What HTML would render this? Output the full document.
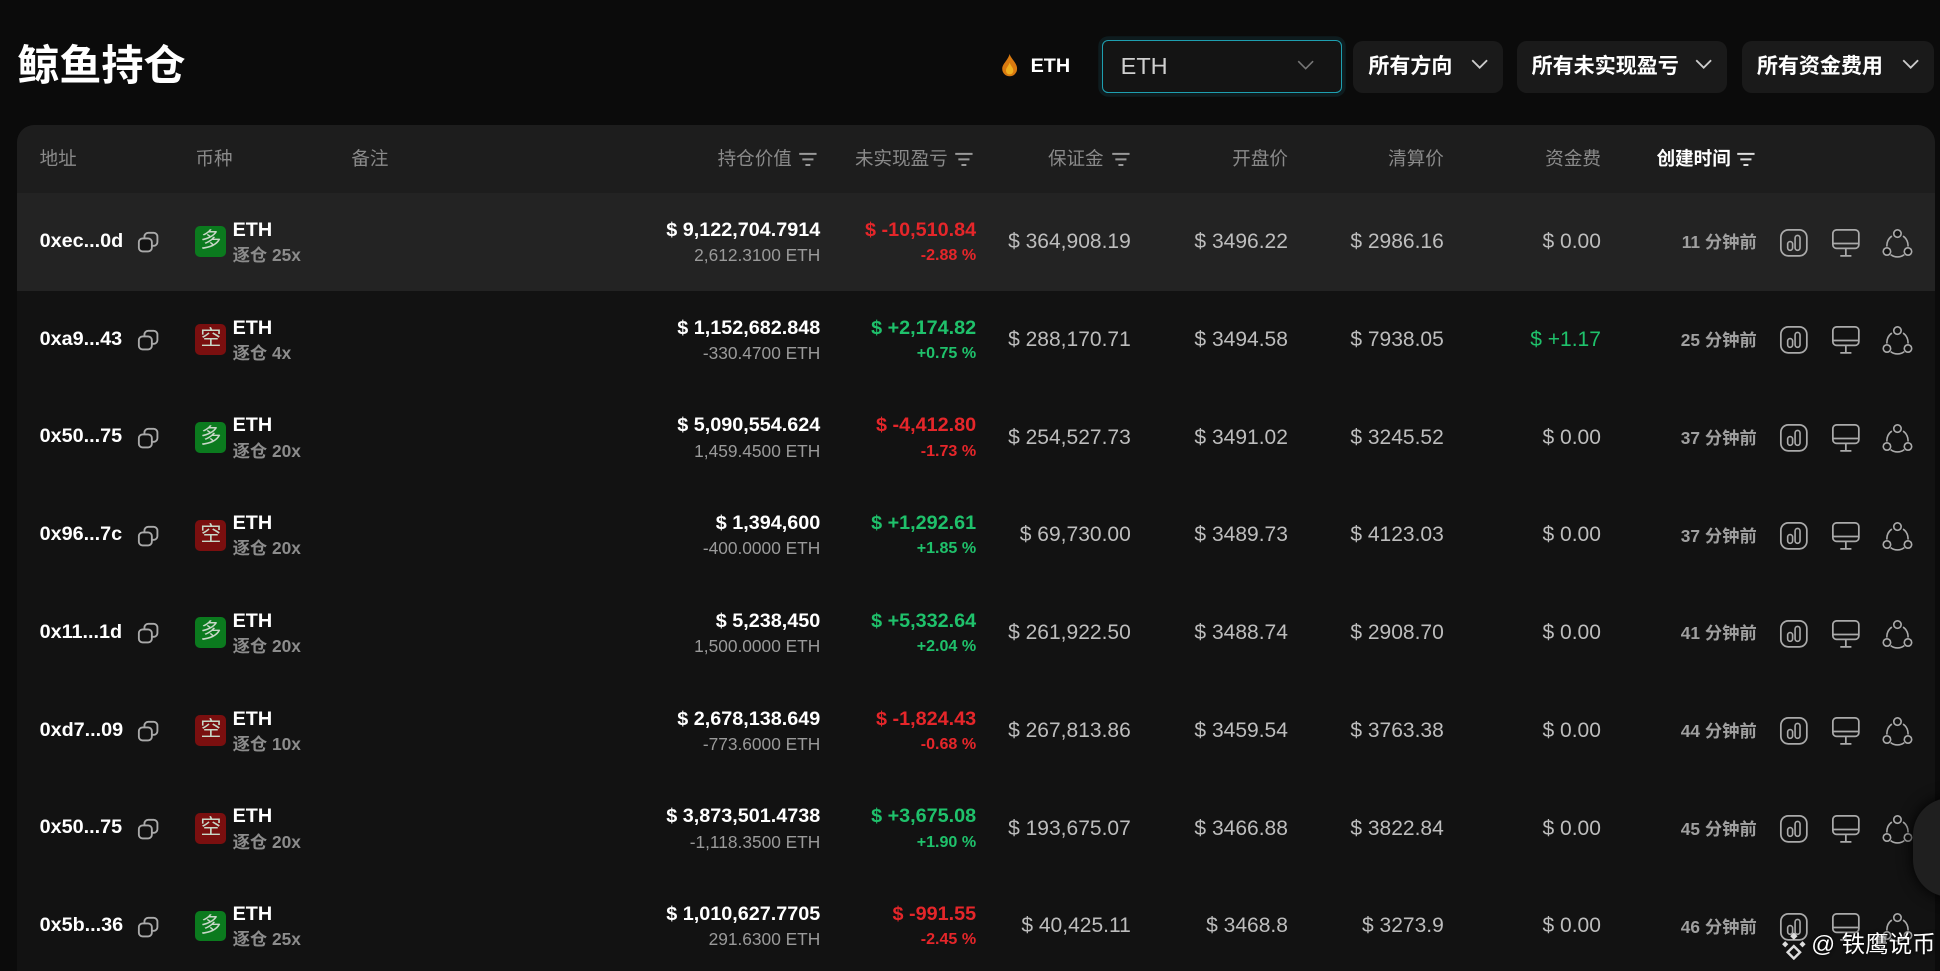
<!DOCTYPE html>
<html><head><meta charset="utf-8"><style>
html,body{margin:0;padding:0;background:#0b0b0b;width:1940px;height:971px;overflow:hidden}
#w{zoom:1.2372;width:1568px;height:785px;position:relative;font-family:"Liberation Sans","Noto Sans CJK SC",sans-serif;color:#fff}
.a{position:absolute;white-space:nowrap}
.title{left:14px;top:31px;font-size:34px;font-weight:bold;line-height:46px}
.dd{top:33px;height:42px;border-radius:8px;background:#1a1a1a;font-weight:bold;font-size:17px;line-height:42px;box-sizing:border-box;padding-left:12px}
.dd svg{position:absolute;right:12px;top:15px}
.tbl{left:14px;top:101px;width:1550px;height:700px;background:#121212;border-radius:14px;overflow:hidden}
.hdr{left:0;top:0;width:1550px;height:55px;background:#1d1d1d}
.h{top:19px;font-size:15px;color:#8a8a8a;line-height:18px}
.row{left:0;width:1550px;height:79px}
.addr{left:18px;top:29px;font-size:16px;font-weight:bold;line-height:20px}
.cp{left:97px;top:31px}
.bd{left:144px;top:27px;width:25px;height:25px;border-radius:4px;font-size:17px;line-height:25px;text-align:center;color:#c8d8c8}
.sym{left:174px;top:21px;font-size:16px;font-weight:bold;line-height:18px}
.lev{left:174px;top:43px;font-size:14px;font-weight:bold;color:#8c8c8c;line-height:16px}
.r{text-align:right}
.v1{right:901px;top:21px;font-size:16px;font-weight:bold;line-height:18px}
.v2{right:901px;top:43px;font-size:14px;color:#9a9a9a;line-height:16px}
.p1{right:775px;top:21px;font-size:16px;font-weight:bold;line-height:18px}
.p2{right:775px;top:43px;font-size:13px;font-weight:bold;line-height:16px}
.g{color:#1fc16b}.rd{color:#e5262a}
.n{top:30px;font-size:17px;color:#bdbdbd;line-height:20px}
.t{right:144px;top:31px;font-size:14px;font-weight:bold;color:#a0a0a0;line-height:18px}
.ic{top:28px}
</style></head><body><div id="w">
<div class="a title">鲸鱼持仓</div>
<svg class="a" style="left:809px;top:44px" width="14" height="19" viewBox="0 0 14 19"><path d="M7 0C8 4 13 7 13 12A6 6 0 0 1 1 12C1 8 5 6 7 0Z" fill="#d97a10"/><path d="M7 7C8 10 10 11 10 13.5A3 3 0 0 1 4 13.5C4 11 6 10 7 7Z" fill="#f0b020"/></svg>
<div class="a" style="left:833px;top:44px;font-size:16px;font-weight:bold;line-height:20px">ETH</div>
<div class="a" style="left:891px;top:32px;width:194px;height:43px;border:1.5px solid #1e9fb0;border-radius:5px;box-sizing:border-box;background:#141414;box-shadow:0 0 0 3px #0e1c1f"><span class="a" style="left:14px;top:10px;font-size:19px;color:#d0d0d0;line-height:22px">ETH</span><svg class="a" style="right:22px;top:16px" width="14" height="9"><path d="M1 1l6 6 6-6" stroke="#777" stroke-width="1.3" fill="none"/></svg></div>
<div class="a dd" style="left:1094px;width:121px">所有方向<svg width="14" height="9"><path d="M1 1l6 6 6-6" stroke="#ccc" stroke-width="1.5" fill="none"/></svg></div>
<div class="a dd" style="left:1226px;width:170px">所有未实现盈亏<svg width="14" height="9"><path d="M1 1l6 6 6-6" stroke="#ccc" stroke-width="1.5" fill="none"/></svg></div>
<div class="a dd" style="left:1408px;width:155px">所有资金费用<svg width="14" height="9"><path d="M1 1l6 6 6-6" stroke="#ccc" stroke-width="1.5" fill="none"/></svg></div>

<div class="a tbl">
<div class="a hdr">
<div class="a h" style="left:18px">地址</div>
<div class="a h" style="left:144px">币种</div>
<div class="a h" style="left:270px">备注</div>
<div class="a h r" style="right:924px">持仓价值</div>
<div class="a h r" style="right:798px">未实现盈亏</div>
<div class="a h r" style="right:672px">保证金</div>
<div class="a h r" style="right:523px">开盘价</div>
<div class="a h r" style="right:397px">清算价</div>
<div class="a h r" style="right:270px">资金费</div>
<div class="a h" style="left:1325px;color:#fff;font-weight:bold">创建时间</div>
<svg class="a" style="left:631px;top:22px" width="16" height="12"><path d="M1 1.5h14M3.5 6h9M6 10.5h4" stroke="#999" stroke-width="1.6"/></svg>
<svg class="a" style="left:757px;top:22px" width="16" height="12"><path d="M1 1.5h14M3.5 6h9M6 10.5h4" stroke="#999" stroke-width="1.6"/></svg>
<svg class="a" style="left:884px;top:22px" width="16" height="12"><path d="M1 1.5h14M3.5 6h9M6 10.5h4" stroke="#999" stroke-width="1.6"/></svg>
<svg class="a" style="left:1389px;top:22px" width="16" height="12"><path d="M1 1.5h14M3.5 6h9M6 10.5h4" stroke="#ddd" stroke-width="1.6"/></svg>
</div>
<div id="rows"></div>
</div>

<div class="a" style="left:1546px;top:645px;width:60px;height:80px;border-radius:40px;background:#1f1f1f;box-shadow:0 0 12px #000"></div>
<svg class="a" style="left:1438px;top:752px" width="24" height="24" viewBox="0 0 24 24"><g fill="#ddd"><path d="M12 2l3 3-3 3-3-3z"/><path d="M5 9l2.5 2.5L5 14l-2.5-2.5z"/><path d="M19 9l2.5 2.5L19 14l-2.5-2.5z"/><path d="M12 13l5 5-5 5-5-5z" fill="none" stroke="#ddd" stroke-width="2"/></g></svg>
<div class="a" style="left:1464px;top:752px;font-size:19px;line-height:24px;color:#fff;text-shadow:0 0 3px #000">@ 铁鹰说币</div>
</div>
<script>
var d=[
["0xec...0d",1,"25x","$ 9,122,704.7914","2,612.3100 ETH",0,"$ -10,510.84","-2.88 %","$ 364,908.19","$ 3496.22","$ 2986.16","$ 0.00","11"],
["0xa9...43",0,"4x","$ 1,152,682.848","-330.4700 ETH",1,"$ +2,174.82","+0.75 %","$ 288,170.71","$ 3494.58","$ 7938.05","$ +1.17","25"],
["0x50...75",1,"20x","$ 5,090,554.624","1,459.4500 ETH",0,"$ -4,412.80","-1.73 %","$ 254,527.73","$ 3491.02","$ 3245.52","$ 0.00","37"],
["0x96...7c",0,"20x","$ 1,394,600","-400.0000 ETH",1,"$ +1,292.61","+1.85 %","$ 69,730.00","$ 3489.73","$ 4123.03","$ 0.00","37"],
["0x11...1d",1,"20x","$ 5,238,450","1,500.0000 ETH",1,"$ +5,332.64","+2.04 %","$ 261,922.50","$ 3488.74","$ 2908.70","$ 0.00","41"],
["0xd7...09",0,"10x","$ 2,678,138.649","-773.6000 ETH",0,"$ -1,824.43","-0.68 %","$ 267,813.86","$ 3459.54","$ 3763.38","$ 0.00","44"],
["0x50...75",0,"20x","$ 3,873,501.4738","-1,118.3500 ETH",1,"$ +3,675.08","+1.90 %","$ 193,675.07","$ 3466.88","$ 3822.84","$ 0.00","45"],
["0x5b...36",1,"25x","$ 1,010,627.7705","291.6300 ETH",0,"$ -991.55","-2.45 %","$ 40,425.11","$ 3468.8","$ 3273.9","$ 0.00","46"]];
var cp='<svg class="a cp" width="18" height="18" viewBox="0 0 18 18"><rect x="6" y="1.5" width="10.5" height="10.5" rx="3" fill="none" stroke="#aaa" stroke-width="1.5"/><rect x="1.5" y="6" width="10.5" height="10.5" rx="3" fill="#121212" stroke="#aaa" stroke-width="1.5"/></svg>';
var ic='<svg class="a ic" style="left:1424px" width="24" height="24" viewBox="0 0 24 24"><rect x="1.5" y="1.5" width="21" height="21" rx="6" fill="none" stroke="#aaa" stroke-width="1.4"/><rect x="7" y="11" width="4" height="7" rx="2" fill="none" stroke="#aaa" stroke-width="1.3"/><rect x="13" y="6" width="4" height="12" rx="2" fill="none" stroke="#aaa" stroke-width="1.3"/></svg>'
+'<svg class="a ic" style="left:1466px" width="24" height="24" viewBox="0 0 24 24"><rect x="1.5" y="1.5" width="21" height="15" rx="3" fill="none" stroke="#aaa" stroke-width="1.4"/><path d="M2 12.5h20M12 17v5M7.5 22.5h9" stroke="#aaa" stroke-width="1.4"/></svg>'
+'<svg class="a ic" style="left:1507px" width="25" height="25" viewBox="0 0 25 25"><path d="M8 6.5A9 9 0 0 0 4 15M17 6.5A9 9 0 0 1 21 15M7 21.5A9 9 0 0 0 18 21.5" fill="none" stroke="#aaa" stroke-width="1.3"/><circle cx="12.5" cy="4.5" r="3" fill="#121212" stroke="#aaa" stroke-width="1.3"/><circle cx="4" cy="19" r="3" fill="#121212" stroke="#aaa" stroke-width="1.3"/><circle cx="21" cy="19" r="3" fill="#121212" stroke="#aaa" stroke-width="1.3"/></svg>';
var h='';
d.forEach(function(r,i){
var bg=i==0?'#232323':'#121212';
var c=r[5]?'g':'rd';
var fc=r[11].indexOf('+')>0?'color:#1fc16b':'';
h+='<div class="a row" style="top:'+(55+79*i)+'px;background:'+bg+'">'
+'<div class="a addr">'+r[0]+'</div>'+cp
+'<div class="a bd" style="background:'+(r[1]?'#0b7a1e':'#7a0f0f')+'">'+(r[1]?'多':'空')+'</div>'
+'<div class="a sym">ETH</div><div class="a lev">逐仓 '+r[2]+'</div>'
+'<div class="a v1 r">'+r[3]+'</div><div class="a v2 r">'+r[4]+'</div>'
+'<div class="a p1 r '+c+'">'+r[6]+'</div><div class="a p2 r '+c+'">'+r[7]+'</div>'
+'<div class="a n r" style="right:650px">'+r[8]+'</div>'
+'<div class="a n r" style="right:523px">'+r[9]+'</div>'
+'<div class="a n r" style="right:397px">'+r[10]+'</div>'
+'<div class="a n r" style="right:270px;'+fc+'">'+r[11]+'</div>'
+'<div class="a t r">'+r[12]+' 分钟前</div>'+ic+'</div>';
});
document.getElementById('rows').outerHTML=h;
</script>
</body></html>
